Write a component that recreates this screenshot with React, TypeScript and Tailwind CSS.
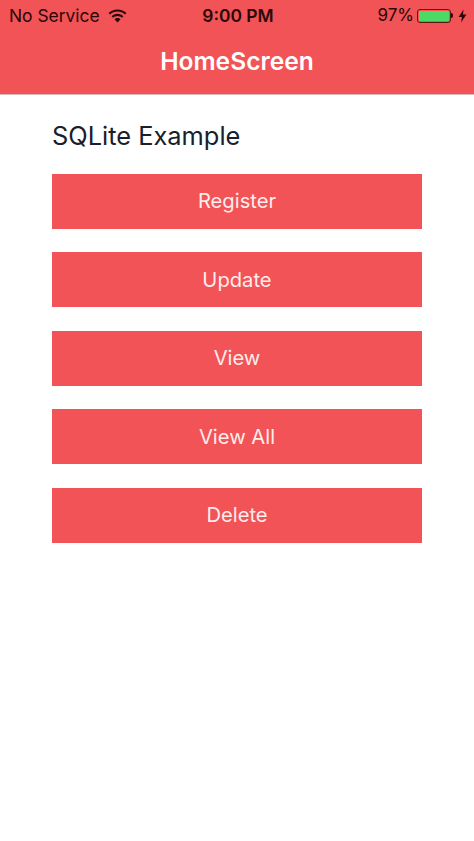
export default function App() {
  const buttons = ["Register", "Update", "View", "View All", "Delete"];
  return (
    <div className="w-[474px] h-[841px] bg-white flex flex-col font-['Inter',sans-serif] overflow-hidden">
      <header className="h-[95px] bg-[#f15356] flex flex-col border-b border-[#d9b9b9]">
        <div className="h-[31px] flex items-center justify-between pl-[9px] pr-[7px] text-[#2a0708]">
          <div className="flex items-center gap-[8px] w-[160px]">
            <span className="text-[17.4px] leading-none">No Service</span>
            <svg width="19" height="14" viewBox="0 0 19 14" fill="currentColor">
              <path d="M9.5 0.5C6 0.5 2.9 1.9 0.6 4.1L2 5.6C3.9 3.8 6.6 2.6 9.5 2.6S15.1 3.8 17 5.6L18.4 4.1C16.1 1.9 13 0.5 9.5 0.5Z" />
              <path d="M9.5 4.8C7.2 4.8 5.1 5.7 3.6 7.2L5 8.7C6.2 7.6 7.8 6.9 9.5 6.9S12.8 7.6 14 8.7L15.4 7.2C13.9 5.7 11.8 4.8 9.5 4.8Z" />
              <path d="M9.5 9C8.3 9 7.3 9.5 6.5 10.2L9.5 13.4L12.5 10.2C11.7 9.5 10.7 9 9.5 9Z" />
            </svg>
          </div>
          <span className="text-[17.4px] leading-none font-semibold">9:00 PM</span>
          <div className="flex items-center justify-end w-[160px]">
            <span className="text-[17px] leading-none mr-[3px]">97%</span>
            <div className="w-[34px] h-[14px] border border-[#5c1a12] rounded-[3px] p-[1px]">
              <div className="w-full h-full bg-[#4cd964] rounded-[1px]" />
            </div>
            <div className="w-[2px] h-[5px] bg-[#2a0708] rounded-r-[2px] mr-[5px]" />
            <svg width="9" height="14" viewBox="0 0 9 14" fill="currentColor">
              <path d="M5.6 0.5L0.6 8H4L3 13.5L8.4 5.6H4.9Z" />
            </svg>
          </div>
        </div>
        <div className="flex-1 flex items-center justify-center pb-[2px]">
          <h1 className="text-white text-[24.6px] font-semibold leading-none">HomeScreen</h1>
        </div>
      </header>
      <main className="px-[52px] flex flex-col">
        <h2 className="text-[#17202c] text-[25.4px] leading-none mt-[28px] mb-[25.6px]">SQLite Example</h2>
        <div className="flex flex-col gap-[23.4px]">
          {buttons.map((b) => (
            <button key={b} className="h-[55px] w-[370px] bg-[#f15356] text-[#ffecec] text-[20.2px] flex items-center justify-center">
              {b}
            </button>
          ))}
        </div>
      </main>
    </div>
  );
}
